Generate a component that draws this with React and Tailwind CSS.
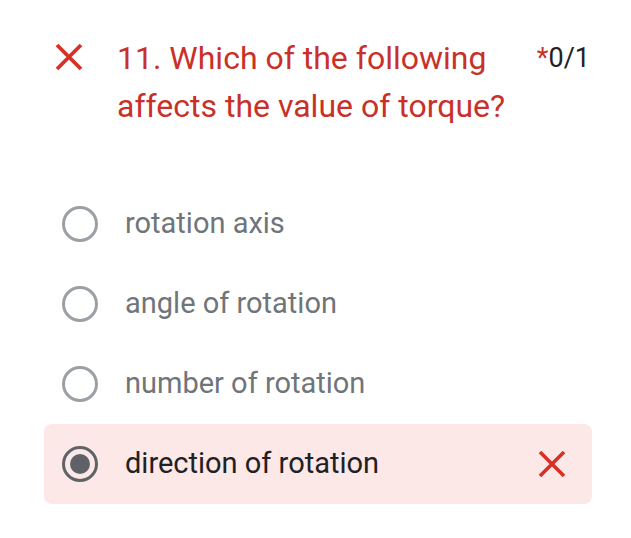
import React from "react";

const Cross = ({ size = 28, color = "#d93025", stroke = 3.6 }) => (
  <svg width={size} height={size} viewBox="0 0 28 28">
    <path d="M2 2 L26 26 M26 2 L2 26" stroke={color} strokeWidth={stroke} fill="none" />
  </svg>
);

const options = [
  { label: "rotation axis" },
  { label: "angle of rotation" },
  { label: "number of rotation" },
  { label: "direction of rotation", selected: true },
];

export default function App() {
  return (
    <div
      className="w-[631px] h-[538px] bg-white"
      style={{ fontFamily: "Roboto, 'Noto Sans', sans-serif" }}
    >
      <div className="flex items-start pt-[34px] pl-[55px] pr-[41px]">
        <div className="shrink-0 pt-[9px]">
          <Cross size={28} stroke={3.8} />
        </div>
        <div className="flex-1 ml-[34px] text-[32px] leading-[48px] text-[#c9302a]">
          11. Which of the following affects the value of torque?
        </div>
        <div className="shrink-0 ml-[24px] text-[27px] leading-[48px] text-[#202124]">
          <span className="text-[#c9302a]">*</span>0/1
        </div>
      </div>

      <div className="mt-[54px] ml-[44px] w-[548px] flex flex-col">
        {options.map((o) => (
          <div
            key={o.label}
            className={`h-[80px] flex items-center pl-[18px] pr-[26px] rounded-[8px] ${
              o.selected ? "bg-[#fce8e6]" : ""
            }`}
          >
            {o.selected ? (
              <div className="w-[36px] h-[36px] rounded-full border-[3px] border-[#5f6368] flex items-center justify-center">
                <div className="w-[20px] h-[20px] rounded-full bg-[#5f6368]" />
              </div>
            ) : (
              <div className="w-[36px] h-[36px] rounded-full border-[3px] border-[#9aa0a6]" />
            )}
            <div
              className={`flex-1 ml-[27px] text-[29px] ${
                o.selected ? "text-[#202124]" : "text-[#70757a]"
              }`}
            >
              {o.label}
            </div>
            {o.selected && <Cross size={28} stroke={3.6} />}
          </div>
        ))}
      </div>
    </div>
  );
}
